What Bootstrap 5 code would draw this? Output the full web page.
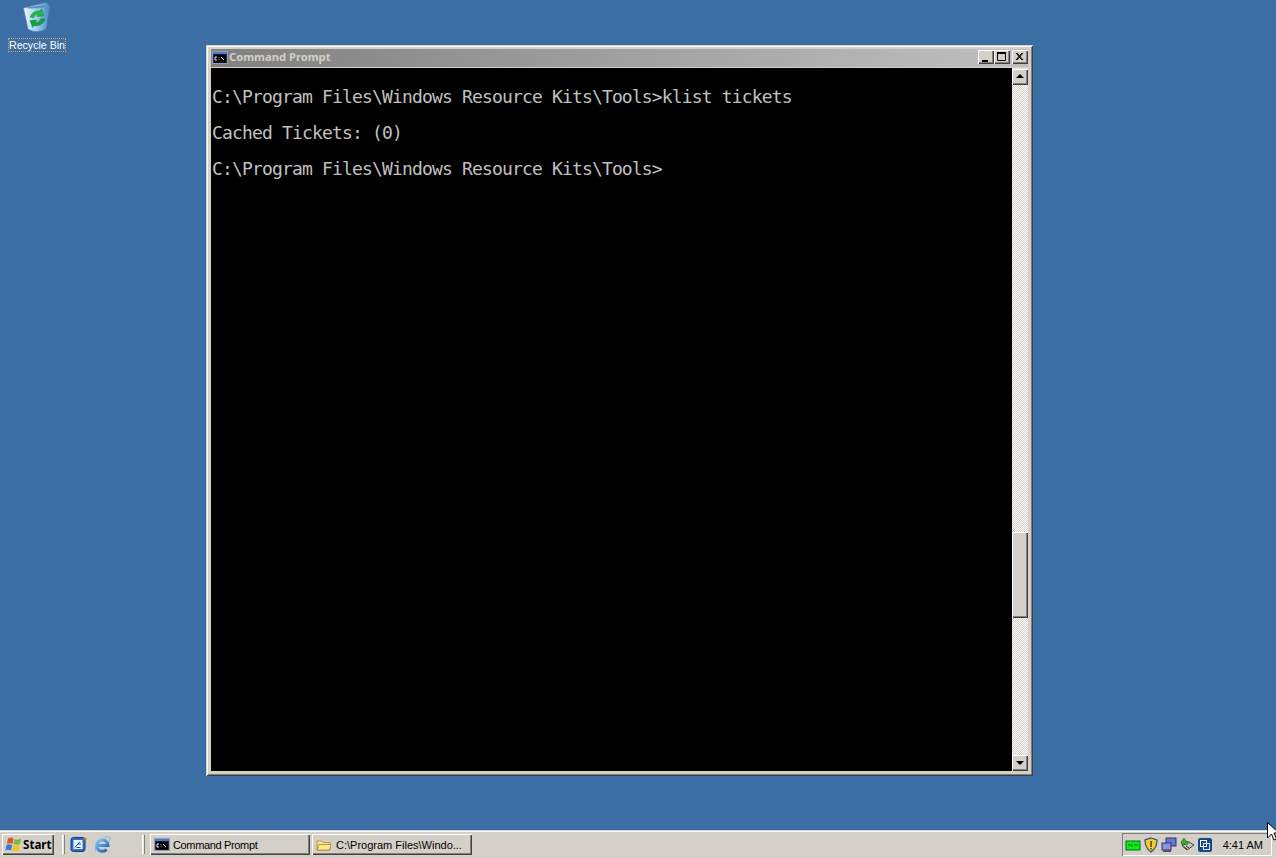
<!DOCTYPE html>
<html lang="en">
<head>
<meta charset="utf-8">
<title>Command Prompt</title>
<link href="https://cdn.jsdelivr.net/npm/bootstrap@5.3.0/dist/css/bootstrap.min.css" rel="stylesheet">
<style>
html,body{height:858px;margin:0;overflow:hidden}
body{font-family:"Liberation Sans",sans-serif;font-size:11px;background:#3a6ea5;color:#000}
.desk{position:relative;height:830px;flex:none}
.desk-item{position:absolute;left:8px;top:1px;width:58px}
.desk-label{color:#fff;line-height:12px;border:1px dotted #d9a066;width:58px;margin-top:5px;height:14px;white-space:nowrap;text-align:center;font-size:10.6px}
.win{position:absolute;left:206px;top:45px;width:827px;height:731px;background:#d4d0c8;
 box-shadow:inset 1px 1px 0 #d4d0c8,inset -1px -1px 0 #404040,inset 2px 2px 0 #fff,inset -2px -2px 0 #808080;padding:4px 5px 5px 5px}
.win-title{height:18px;padding:1px 0 0 1px;background:linear-gradient(90deg,#808080,#c0c0c0 100%);color:#d4d0c8;font-family:"Noto Sans",sans-serif;font-weight:700;font-size:11.2px;line-height:13px;margin-bottom:1px;flex:none}
.win-title span{margin-left:1px}
.cap-btn,.sb-btn,.start-btn,.task-btn{background:#d4d0c8;box-shadow:inset 1px 1px 0 #fff,inset -1px -1px 0 #404040,inset -2px -2px 0 #808080}
.cap-btn{width:16px;height:14px;padding:0;border:0;flex:none}
.cap-gap{margin-left:2px}
.cap-btn svg,.sb-btn svg{display:block}
.console{background:#000;color:#c0c0c0;font-family:"DejaVu Sans Mono","Liberation Mono",monospace;font-size:18px;letter-spacing:-.84px;line-height:18px;margin:0;padding:2px 0 0 1px;width:801px;height:703px;overflow:hidden;white-space:pre;flex:none}
.sbar{width:16px;flex:none;background:repeating-conic-gradient(#d4d0c8 0 25%,#fff 0 50%) 0 0/2px 2px;position:relative;padding-top:1px}
.sb-btn{width:16px;height:16px;flex:none}
.sb-thumb{position:absolute;left:0;top:464px;width:16px;height:86px;background:#d4d0c8;box-shadow:inset 1px 1px 0 #fff,inset -1px -1px 0 #404040,inset -2px -2px 0 #808080}
.tbar{height:28px;background:#d4d0c8;box-shadow:inset 0 1px 0 #d4d0c8,inset 0 2px 0 #fff;padding:4px 4px 3px 2px;flex:none}
.start-btn{width:52px;height:21px;font-family:"Noto Sans",sans-serif;font-weight:700;font-size:11.6px;line-height:21px;padding-left:2px;flex:none}
.start-btn svg{margin-right:1px}
.grip{width:3px;height:19px;margin-top:1px;background:#e8e6e0;border-left:1px solid #fff;border-right:1px solid #808080;flex:none}
.grip-a{margin-left:8px}
.quick{width:77px;padding-left:5px;gap:7px;flex:none}
.task-btn{width:160px;height:21px;line-height:21px;padding-left:4px;white-space:nowrap;flex:none}
.task-btn svg{margin-right:3px;flex:none}
.task-btn span{padding-top:1px}
.task-a{margin-left:5px}
.task-a span{letter-spacing:-.35px}
.task-b{margin-left:2px}
.task-b span{margin-left:1px}
.tray{width:150px;height:23px;margin-top:-1px;box-shadow:inset 1px 1px 0 #808080,inset -1px -1px 0 #fff;padding-left:3px;gap:2px;flex:none}
.clock{margin-left:auto;margin-right:9px;padding-top:1px;font-size:11px}
.ptr{position:absolute;left:1267px;top:822px;z-index:5}
</style>
</head>
<body class="d-flex flex-column">
<svg width="0" height="0" class="position-absolute">
<defs>
<linearGradient id="binG" x1="0" y1="0" x2="1" y2="0"><stop offset="0" stop-color="#f2f9fd"/><stop offset=".45" stop-color="#a8d0ec"/><stop offset="1" stop-color="#3f88c8"/></linearGradient>
<linearGradient id="ieG" x1="0" y1="0" x2="1" y2="1"><stop offset="0" stop-color="#7cc8f8"/><stop offset="1" stop-color="#1258b8"/></linearGradient>
<linearGradient id="folderG" x1="0" y1="0" x2="0" y2="1"><stop offset="0" stop-color="#fff3b0"/><stop offset="1" stop-color="#e8b83c"/></linearGradient>
<g id="cmdIcon"><rect x=".5" y="1.500" width="15" height="12" fill="#1c2a6c" stroke="#9a9a9a"/><rect x="1" y="2" width="14" height="2" fill="#4a7cd4"/><rect x="2" y="4.500" width="12" height="8" fill="#000"/><path d="M3 7h2M3 7v3M3 10h2M7 7v.6M7 9.500v.6M9 7l3 3" stroke="#f0f0f0" fill="none"/></g>
</defs>
</svg>

<main class="desk">
  <div class="desk-item">
    <div class="d-flex justify-content-center">
      <svg width="30" height="32" viewBox="0 0 30 32">
        <path d="M1.500 7 L24 1.500 L28 5 L24 28 Q14 33 6 28Z" fill="url(#binG)" stroke="#4f86b4" stroke-width=".6"/>
        <path d="M3 7 Q12 4 26.500 4.500 Q16 9 3 7Z" fill="#5f8fb8"/>
        <path d="M8 16 Q11 9 18 10 L19.500 8 L22 15 L15 15.500 L16.500 13 Q13 13 11.500 17Z" fill="#1fb84a" stroke="#0d7a2c" stroke-width=".4"/>
        <path d="M23 18 Q20 26 12 24.500 L10.500 26.500 L8 19.500 L14.500 19 L13.500 21.500 Q17 22 19 17.500Z" fill="#12a23c" stroke="#0d7a2c" stroke-width=".4"/>
      </svg>
    </div>
    <div class="desk-label">Recycle Bin</div>
  </div>

  <section class="win d-flex flex-column">
    <div class="win-title d-flex align-items-start">
      <svg width="16" height="16" viewBox="0 0 16 16"><use href="#cmdIcon"/></svg>
      <span class="flex-grow-1">Command Prompt</span>
      <button class="cap-btn" type="button" aria-label="Minimize"><svg width="16" height="14"><rect x="4" y="10" width="6" height="2" fill="#000"/></svg></button>
      <button class="cap-btn" type="button" aria-label="Maximize"><svg width="16" height="14"><path d="M3.500 3.500h8v7h-8z" fill="none" stroke="#000"/><rect x="3" y="2" width="9" height="2" fill="#000"/></svg></button>
      <button class="cap-btn cap-gap" type="button" aria-label="Close"><svg width="16" height="14"><path d="M4 3l6 7M5 3l6 7M10 3l-6 7M11 3l-6 7" stroke="#000" fill="none"/></svg></button>
    </div>
    <div class="d-flex flex-grow-1">
<pre class="console">

C:\Program Files\Windows Resource Kits\Tools&gt;klist tickets

Cached Tickets: (0)

C:\Program Files\Windows Resource Kits\Tools&gt;</pre>
      <div class="sbar d-flex flex-column justify-content-between">
        <div class="sb-btn"><svg width="16" height="16"><path d="M8 5l4 4H4z" fill="#000"/></svg></div>
        <div class="sb-thumb"></div>
        <div class="sb-btn"><svg width="16" height="16"><path d="M4 6h8l-4 4z" fill="#000"/></svg></div>
      </div>
    </div>
  </section>
</main>

<footer class="tbar d-flex">
  <div class="start-btn d-flex align-items-center">
    <svg width="18" height="17" viewBox="0 0 18 17"><path d="M4 2.500 Q7 0.500 9.500 2.500 L8.500 8 Q5.500 6.500 3 8Z" fill="#e2542a"/><path d="M10.500 3 Q13.500 4.500 17 2.500 L16 8 Q12.500 9.500 9.500 8Z" fill="#6fbf3c"/><path d="M2.500 9 Q5.500 7.500 8.200 9 L7 14.500 Q4 13 1.500 14.500Z" fill="#3a78d8"/><path d="M9.200 9 Q12.500 10.500 15.800 9 L14.800 14.500 Q11.500 16 8 14.500Z" fill="#f4c21c"/></svg>
    <span>Start</span>
  </div>
  <div class="grip grip-a"></div>
  <div class="quick d-flex align-items-center">
    <svg width="17" height="17" viewBox="0 0 17 17"><rect x="1" y="1.500" width="14" height="14" rx="2.500" fill="#2d6cc8" stroke="#123a80"/><rect x="3.500" y="4" width="9" height="9" fill="#eef5fc"/><path d="M5 11.500l5-6M6.500 11.500h4M8 8h3" stroke="#1c4a98" fill="none"/><circle cx="15" cy="3" r="1.500" fill="#e2642a"/></svg>
    <svg width="17" height="17" viewBox="0 0 17 17"><path d="M3.500 9.500h10.500A5.700 5.700 0 1 0 12.500 13.500" fill="none" stroke="url(#ieG)" stroke-width="3"/><path d="M1.500 15.500Q-.5 12 7 5T15.500 1Q17 3 14.500 6.500" fill="none" stroke="#6fb4ec"/></svg>
  </div>
  <div class="grip"></div>
  <div class="task-btn task-a d-flex align-items-center">
    <svg width="16" height="16" viewBox="0 0 16 16"><use href="#cmdIcon"/></svg><span>Command Prompt</span>
  </div>
  <div class="task-btn task-b d-flex align-items-center">
    <svg width="16" height="16" viewBox="0 0 16 16"><path d="M1 4h5l1 1.500h7V13H1z" fill="url(#folderG)" stroke="#a8842c" stroke-width=".8"/><path d="M1 13l2-5.500h12L13.500 13z" fill="#ffe98c" stroke="#a8842c" stroke-width=".8"/></svg><span>C:\Program Files\Windo...</span>
  </div>
  <div class="tray d-flex align-items-center ms-auto">
    <svg width="16" height="16" viewBox="0 0 16 16"><rect x="1" y="4" width="14" height="9" fill="#0cf00c" stroke="#063"/><path d="M3 8h3M7 7v3M9 8h4" stroke="#063"/></svg>
    <svg width="16" height="16" viewBox="0 0 16 16"><path d="M8 1 L14 3 Q14 11 8 15 Q2 11 2 3Z" fill="#f4cc28" stroke="#2a4a90" stroke-width="1.200"/><path d="M7.500 4h1.200v6H7.500zM7.500 11h1.200v1.500H7.500z" fill="#222"/></svg>
    <svg width="16" height="16" viewBox="0 0 16 16"><rect x="5" y="1" width="10" height="8" fill="#6a78c8" stroke="#2a3480"/><rect x="1" y="6" width="9" height="7" fill="#8a96d8" stroke="#2a3480"/><rect x="2" y="13" width="8" height="2" fill="#555"/></svg>
    <svg width="16" height="16" viewBox="0 0 16 16"><path d="M3 9l7-4 5 3-7 5z" fill="#c8c8c0" stroke="#444"/><path d="M2 5l3-4 2 3 3 1-2 3-2-1-3 1z" fill="#3ca83c" stroke="#1a6a1a" stroke-width=".6"/><path d="M5 10l3 2M7 9l3 2" stroke="#333"/></svg>
    <svg width="16" height="16" viewBox="0 0 16 16"><rect x="1" y="1" width="14" height="14" rx="2" fill="#164a8c"/><rect x="3.500" y="3.500" width="6" height="6" fill="none" stroke="#fff"/><rect x="6.500" y="6.500" width="6" height="6" fill="none" stroke="#cfe2f6"/></svg>
    <span class="clock">4:41 AM</span>
  </div>
</footer>
<svg class="ptr" width="12" height="20" viewBox="0 0 12 20"><path d="M.5.5V16l4-4 2.500 6 2.500-1-2.500-6h5z" fill="#fff" stroke="#000"/></svg>
</body>
</html>
